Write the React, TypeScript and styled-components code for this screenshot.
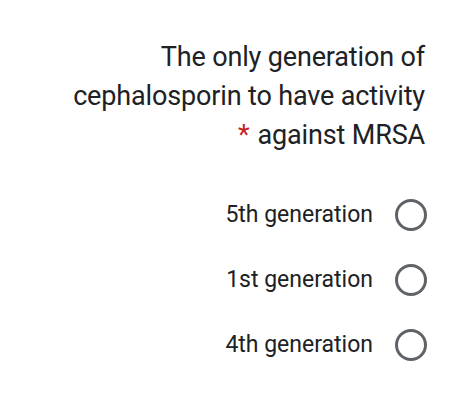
import React from "react";
import styled, { createGlobalStyle } from "styled-components";

const Global = createGlobalStyle`
  html, body { margin: 0; padding: 0; background: #fff; }
  body { font-family: Roboto, "Noto Sans", sans-serif; color: #202124; }
`;

const Page = styled.div`
  width: 474px;
  height: 410px;
  box-sizing: border-box;
  padding: 38px 47px 0 0;
  display: flex;
  flex-direction: column;
  align-items: flex-end;
`;

const Title = styled.div`
  margin-right: 2px;
  font-size: 27px;
  line-height: 39px;
  text-align: right;
  letter-spacing: -0.15px;
`;

const Star = styled.span`
  color: #c5221f;
  margin-right: 8px;
`;

const Options = styled.div`
  margin-top: 44px;
  display: flex;
  flex-direction: column;
  gap: 33px;
  align-items: flex-end;
`;

const Option = styled.label`
  display: flex;
  align-items: center;
  gap: 22px;
  font-size: 23px;
  line-height: 32px;
`;

const Radio = styled.span`
  width: 26px;
  height: 26px;
  border: 3px solid #5f6368;
  border-radius: 50%;
`;

const items = ["5th generation", "1st generation", "4th generation"];

export default function App() {
  return (
    <>
      <Global />
      <Page>
        <Title>
          The only generation of
          <br />
          cephalosporin to have activity
          <br />
          <Star>*</Star>against MRSA
        </Title>
        <Options>
          {items.map((t) => (
            <Option key={t}>
              {t}
              <Radio />
            </Option>
          ))}
        </Options>
      </Page>
    </>
  );
}
